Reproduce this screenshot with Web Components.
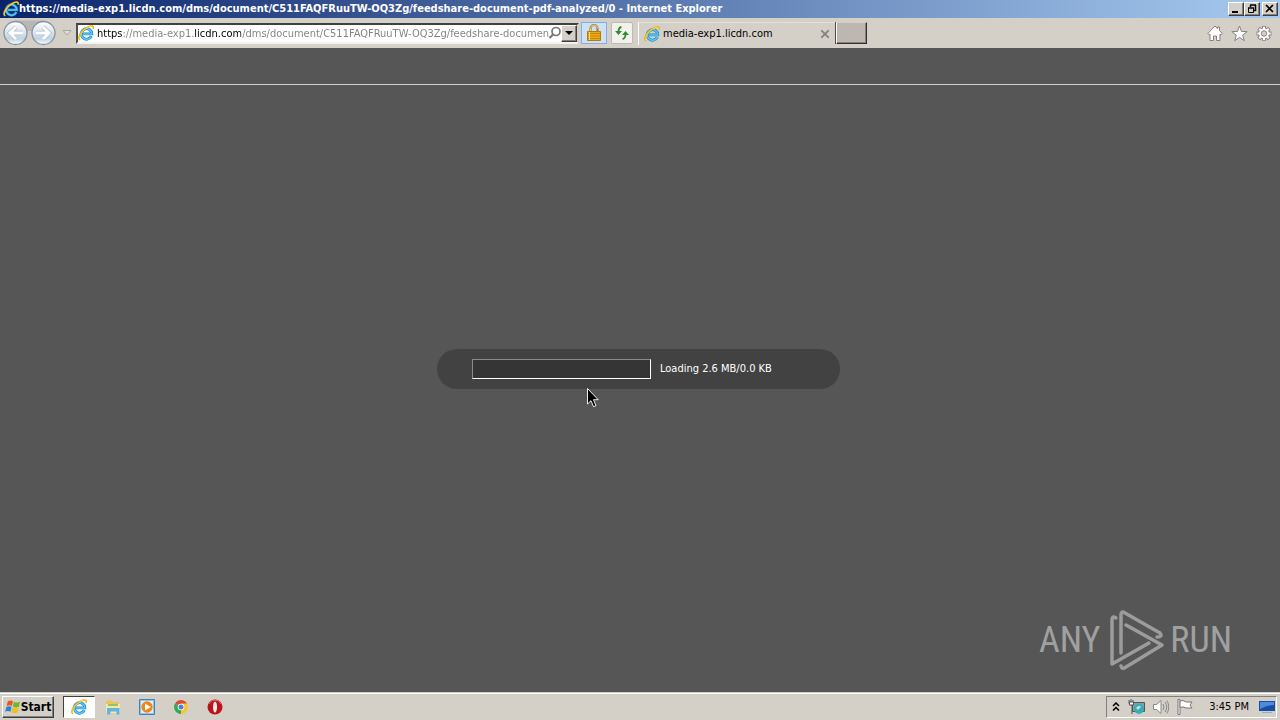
<!DOCTYPE html>
<html lang="en">
<head>
<meta charset="utf-8">
<title>https://media-exp1.licdn.com - Internet Explorer</title>
<style>
  body {
    margin: 0;
    min-height: 100vh;
    display: flex;
    flex-direction: column;
    background: #565656;
    color: #000;
    font: 11px/14px "DejaVu Sans Condensed", "DejaVu Sans", sans-serif;
  }
  pdf-viewer { flex: 1; }
</style>
</head>
<body>
<title-bar>https://media-exp1.licdn.com/dms/document/C511FAQFRuuTW-OQ3Zg/feedshare-document-pdf-analyzed/0 - Internet Explorer</title-bar>
<nav-bar>
  <address-box slot="address" url="https://media-exp1.licdn.com/dms/document/C511FAQFRuuTW-OQ3Zg/feedshare-documen"></address-box>
  <browser-tab slot="tab">media-exp1.licdn.com</browser-tab>
</nav-bar>
<pdf-viewer>
  <load-progress>Loading 2.6 MB/0.0 KB</load-progress>
  <any-run slot="mark"></any-run>
</pdf-viewer>
<task-bar>3:45 PM</task-bar>

<script>
const RESET = `
  button { font: inherit; color: inherit; padding: 0; margin: 0; border: 0; background: none; box-sizing: border-box; display: flex; align-items: center; justify-content: center; flex: none; }
  svg { display: block; flex: none; }
`;

class Base extends HTMLElement {
  constructor() {
    super();
    this.attachShadow({ mode: "open" });
    this.shadowRoot.innerHTML = `<style>${RESET}</style>` + this.render();
  }
}

class IeIcon extends Base {
  render() {
    return `
      <style>
        :host { display: block; flex: none; width: 16px; height: 16px; }
        svg { width: 100%; height: 100%; }
      </style>
      <svg viewBox="0 0 16 16" fill="none">
        <path d="M13.3 11.2A5.3 5.3 0 1 1 13.8 8.9H4.8" stroke="#1b86cf" stroke-width="2.9"/>
        <path d="M13.3 11.2A5.3 5.3 0 1 1 13.8 8.9H4.8" stroke="#5fc8f5" stroke-width="1.5"/>
        <path d="M2 15C-1 12 4 4.800 10 2C13.500.3 16 .8 15.200 3.700" stroke="#e9a90d" stroke-width="1.700"/>
        <path d="M2 14.600C0 11.500 4.500 5 10 2.200C13 .8 15.500 1 15 3.400" stroke="#ffe052" stroke-width=".8"/>
      </svg>`;
  }
}

class TitleBar extends Base {
  render() {
    return `
      <style>
        :host { display: flex; align-items: center; height: 18px; padding: 0 2px 0 3px; background: linear-gradient(90deg, #0a246a, #a6caf0); color: #fff; font-weight: bold; }
        .text { flex: 1; min-width: 0; overflow: hidden; white-space: nowrap; }
        .buttons { display: flex; }
        button { width: 16px; height: 14px; background: #d4d0c8; border: 1px solid; border-color: #fff #404040 #404040 #fff; box-shadow: inset -1px -1px #808080; }
        .close { margin-left: 2px; }
      </style>
      <ie-icon></ie-icon>
      <div class="text"><slot></slot></div>
      <div class="buttons">
        <button aria-label="Minimize"><svg width="12" height="10"><path d="M2 8h6" stroke="#000" stroke-width="2"/></svg></button>
        <button aria-label="Restore"><svg width="12" height="10" fill="none" stroke="#000"><path d="M4 1h6M4.500 1v2M9.500 1v5.500H8M2 4h6" stroke-width="1.500"/><path d="M2.500 4v4.500h5V4"/></svg></button>
        <button class="close" aria-label="Close"><svg width="12" height="10"><path d="M2 1l7 7M9 1L2 8" stroke="#000" stroke-width="1.700"/></svg></button>
      </div>`;
  }
}

class AddressBox extends Base {
  render() {
    // the scheme and the domain are black, the rest of the url is grey
    return `
      <style>
        :host { display: flex; align-items: center; box-sizing: border-box; width: 503px; height: 21px; background: #fff; border: 2px solid; border-color: #404040 #d4d0c8 #f4f2ee #505050; }
        input { flex: 1; min-width: 0; height: 16px; margin-left: 3px; padding: 0; border: 0; outline: 0; font: inherit; color: transparent;
          background: linear-gradient(90deg, #000 26px, #808080 26px, #808080 97px, #000 97px, #000 144px, #808080 144px); -webkit-background-clip: text; background-clip: text; }
        .search { width: 12px; }
        .drop { width: 16px; height: 17px; background: #d4d0c8; border: 1px solid; border-color: #fff #404040 #404040 #fff; box-shadow: inset -1px -1px #808080; }
      </style>
      <ie-icon></ie-icon>
      <input type="text" aria-label="Address">
      <button class="search" aria-label="Search"><svg width="12" height="14" viewBox="0 0 12 14" fill="none" stroke="#777"><circle cx="7" cy="5.500" r="4" stroke-width="1.700"/><path d="M4 8.500L.5 12" stroke-width="2.200"/></svg></button>
      <button class="drop" aria-label="Show history"><svg width="8" height="4"><path d="M0 0h8L4 4z"/></svg></button>`;
  }

  connectedCallback() {
    this.shadowRoot.querySelector("input").value = this.getAttribute("url");
  }
}

class BrowserTab extends Base {
  render() {
    return `
      <style>
        :host { display: flex; align-items: center; box-sizing: border-box; width: 198px; height: 23px; padding: 0 7px 0 5px; border-left: 1px solid #fff; border-top: 1px solid #e4e0da; }
        .label { flex: 1; white-space: nowrap; margin-left: 3px; }
      </style>
      <ie-icon></ie-icon>
      <span class="label"><slot></slot></span>
      <button aria-label="Close tab"><svg width="8" height="8"><path d="M0 0l8 8M8 0L0 8" stroke="#85827e" stroke-width="1.800"/></svg></button>`;
  }
}

class NavBar extends Base {
  render() {
    return `
      <style>
        :host { display: flex; align-items: center; height: 30px; padding: 0 8px 0 3px; background: #d4d0c8; }
        .menu { width: 19px; height: 22px; }
        .lock, .refresh { height: 22px; border: 1px solid; }
        .lock { width: 26px; margin-left: 2px; background: #cce0f8; border-color: #83aeea; }
        .refresh { width: 22px; margin: 0 5px 0 4px; background: #f3f1ee; border-color: #bdb9b3; border-radius: 2px; }
        .newtab { width: 31px; height: 22px; background: #bdb6b1; border: 1px solid; border-color: #d4d0c8 #303030 #303030 #fff; outline: 0; box-shadow: -1px 0 #504c48, inset -1px -1px #85817c; }
        .tools { margin-left: auto; display: flex; gap: 8px; }
      </style>
      <svg width="54" height="28" viewBox="0 0 54 28">
        <defs>
          <linearGradient id="ball" x2="0" y2="1"><stop offset="0" stop-color="#fff"/><stop offset=".5" stop-color="#d9e2ea"/><stop offset=".75" stop-color="#bdd4e5"/><stop offset="1" stop-color="#fff"/></linearGradient>
        </defs>
        <path d="M12 1.500H41V12H12z" fill="#b9b6b3"/>
        <g fill="url(#ball)" stroke="#8494a2" stroke-width="1.300"><circle cx="12.500" cy="14" r="11.500"/><circle cx="40.500" cy="14" r="11.500"/></g>
        <g fill="none" stroke="#aebdca" stroke-width="4.500"><path d="M20 14H7M13 8l-6 6 6 6M33 14h13M40 8l6 6-6 6"/></g>
        <g fill="none" stroke="#fff" stroke-width="3"><path d="M20 14H7M13 8l-6 6 6 6M33 14h13M40 8l6 6-6 6"/></g>
      </svg>
      <button class="menu" aria-label="Recent pages"><svg width="10" height="6"><path d="M1 .5h8L5 5z" fill="#e2dfda" stroke="#aaa6a1"/></svg></button>
      <slot name="address"></slot>
      <button class="lock" aria-label="Security report"><svg width="14" height="18" viewBox="0 0 14 18">
        <path d="M3.500 9V4.500a3.500 3.500 0 0 1 7 0V9" fill="none" stroke="#a88126" stroke-width="2.200"/>
        <path d="M3.500 8V4.500a3.500 3.500 0 0 1 7 0" fill="none" stroke="#f4d990" stroke-width=".8"/>
        <path d="M.5 7.500h13v9H.5z" fill="#e9ac16" stroke="#b87b0b"/><path d="M1 9.500h12M1 12h12M1 14.500h12" stroke="#ca850b"/><path d="M2.500 8v8" stroke="#ffda70"/>
      </svg></button>
      <button class="refresh" aria-label="Refresh"><svg width="14" height="14" viewBox="0 0 14 14" fill="none" stroke="#358a36" stroke-width="1.800">
        <path d="M6.500 1Q3.500 1.500 3.500 6M7.500 13Q10.500 12.500 10.500 8"/><path d="M0 5h7L3.500 9zM7 9h7L10.500 5z" fill="#358a36" stroke="none"/>
      </svg></button>
      <slot name="tab"></slot>
      <button class="newtab" aria-label="New tab"></button>
      <div class="tools">
        <button aria-label="Home"><svg width="16" height="17" viewBox="0 0 16 17"><path d="M8 1L.8 8.500l1.500 1.300L3 9.200V15.500h3.500V11h3v4.500H13V9.200l.8.600 1.500-1.300L12.500 5.600V2h-2v1.600z" fill="#fff" stroke="#85817d"/></svg></button>
        <button aria-label="Favorites"><svg width="17" height="17" viewBox="0 0 17 17"><path d="M8.500 1l2 5.400 5.700.2-4.500 3.500 1.600 5.600-4.800-3.300-4.800 3.300 1.600-5.600L.8 6.600l5.700-.2z" fill="#fff" stroke="#85817d"/></svg></button>
        <button aria-label="Tools"><svg width="16" height="17" viewBox="-8 -8.500 16 17">
          <path d="M0-7.500V7.500M-7.500 0H7.500M-5.300-5.300L5.300 5.300M-5.300 5.300L5.300-5.300" stroke="#85817d" stroke-width="4"/>
          <circle r="5.800" fill="#85817d"/><circle r="5" fill="#fff"/>
          <path d="M0-6.700V-3M0 3v3.700M-6.700 0H-3M3 0h3.700M-4.700-4.700L-3-3M3 3l1.700 1.700M-4.700 4.700L-3 3M3-3l1.700-1.700" stroke="#fff" stroke-width="2.200"/>
          <circle r="2.700" fill="#d4d0c8" stroke="#85817d"/>
        </svg></button>
      </div>`;
  }
}

class LoadProgress extends Base {
  render() {
    return `
      <style>
        :host { display: flex; align-items: center; box-sizing: border-box; position: relative; width: 403px; height: 40px; padding-left: 35px; gap: 9px; border-radius: 20px; background: #424242; color: #fff; }
        progress { appearance: none; -webkit-appearance: none; box-sizing: border-box; width: 179px; height: 20px; border: 1px solid; border-color: #8a8a8a #fff #fff #8a8a8a; background: #353535; }
        progress::-webkit-progress-bar { background: #353535; }
        progress::-webkit-progress-value { background: #0a246a; }
        label { white-space: nowrap; }
        .pointer { position: absolute; left: 150px; top: 39px; }
      </style>
      <progress id="bar" value="0" max="100"></progress>
      <label for="bar"><slot></slot></label>
      <svg class="pointer" width="12" height="20" viewBox="0 0 12 20"><path d="M.5.5v15.500l3.500-3.300 2.500 6 2.500-1-2.500-6h4.700z" stroke="#fff" stroke-width=".9"/></svg>`;
  }
}

class AnyRun extends Base {
  render() {
    return `
      <style>
        :host { display: flex; align-items: center; gap: 6px; color: #a0a0a0; font: 36px/62px "Liberation Sans Narrow", "Roboto Condensed", Roboto, sans-serif; }
      </style>
      <span>ANY</span>
      <svg width="58" height="62" viewBox="0 0 58 62" fill="none" stroke="#9c9c9c" stroke-width="3.500" stroke-linejoin="round" stroke-linecap="round">
        <path d="M10 9Q6 6 6 11V55L43 34"/>
        <path d="M15 44V6Q15 1 19 4L54 24Q57 28 51 28"/>
        <path d="M20 16L56 36L20 58Q16 61 15 57"/>
      </svg>
      <span>RUN</span>`;
  }
}

class PdfViewer extends Base {
  render() {
    return `
      <style>
        :host { display: grid; grid-template-rows: 37px 1fr 39px; position: relative; background: #565656; }
        .toolbar { border-bottom: 1px solid #d4d0c8; box-sizing: border-box; }
        .page { display: grid; place-items: center; padding-right: 3px; }
        .mark { position: absolute; right: 48px; bottom: 21px; }
      </style>
      <div class="toolbar"></div>
      <div class="page"><slot></slot></div>
      <div class="mark"><slot name="mark"></slot></div>`;
  }
}

class TaskBar extends Base {
  render() {
    return `
      <style>
        :host { display: flex; align-items: center; box-sizing: border-box; height: 28px; padding: 1px 3px 1px 2px; background: #d4d0c8; border-top: 1px solid #d4d0c8; box-shadow: inset 0 1px #fff; }
        .start { width: 52px; height: 22px; font-weight: bold; font-size: 12px; border: 1px solid; border-color: #fff #404040 #404040 #fff; box-shadow: inset -1px -1px #808080; }
        .apps { display: flex; margin-left: 9px; }
        .apps button { width: 34px; height: 22px; }
        .apps .active { width: 32px; margin-right: 1px; background: #fff; border: 1px solid; border-color: #404040 #fff #fff #404040; }
        .tray { display: flex; align-items: center; gap: 8px; box-sizing: border-box; height: 22px; margin-left: auto; padding: 0 1px 0 5px; border: 1px solid; border-color: #808080 #fff #fff #808080; }
        .clock { margin: 0 2px 0 8px; white-space: nowrap; }
      </style>
      <button class="start">
        <svg width="16" height="16" viewBox="0 0 17 16"><path d="M3 2Q6 0 8.500 2L7.300 7Q4.500 5.500 1.700 7z" fill="#e95722"/><path d="M9.500 2.500Q12 4 16 2.500L14.700 8Q11 9 8.300 7.500z" fill="#72b72a"/><path d="M1.500 8Q4.500 6.500 7 8L5.800 13Q3 11.500.2 13z" fill="#2b82d5"/><path d="M8 8.500Q11 10 14.500 9L13.300 14Q9.500 15 6.700 13.500z" fill="#f5bd19"/></svg>
        Start
      </button>
      <div class="apps">
        <button class="active" aria-label="Internet Explorer"><ie-icon></ie-icon></button>
        <button aria-label="Explorer"><svg width="16" height="16" viewBox="0 0 16 16"><path d="M1 2l5-1 2 2h6v11H1z" fill="#e9c65a"/><path d="M1 5h14v9H1z" fill="#f8e79c"/><path d="M3 6h10" stroke="#73b36a" stroke-width="1.500"/><path d="M2 15.500V9h12.500v6.500h-3V12.500h-6v3z" fill="#62b5e2"/></svg></button>
        <button aria-label="Media Player"><svg width="16" height="16" viewBox="0 0 16 16"><path d="M.5.5h15v15H.5z" fill="#8ac5ee" stroke="#3e84bc"/><path d="M2 2h12v12H2z" fill="#dff0fb"/><circle cx="8" cy="8" r="5.700" fill="#f08513"/><path d="M6 4.500L12 8l-6 3.500z" fill="#fff"/></svg></button>
        <button aria-label="Chrome"><svg width="14" height="14" viewBox="0 0 14 14"><path d="M7 7L1 3.500A7 7 0 0 1 13 3.500z" fill="#df4938"/><path d="M7 7L1 3.500A7 7 0 0 0 7 14L10 8.500z" fill="#35a853"/><path d="M7 7L7 14A7 7 0 0 0 13 3.500H7z" fill="#fac62d"/><circle cx="7" cy="7" r="3.300" fill="#fff"/><circle cx="7" cy="7" r="2.500" fill="#4285d5"/></svg></button>
        <button aria-label="Opera"><svg width="16" height="16" viewBox="0 0 16 16"><circle cx="8" cy="8" r="7.500" fill="#b91419"/><path d="M2 5a6.500 6.500 0 0 1 12 0" stroke="#df6b6b" stroke-width="1" fill="none"/><ellipse cx="8" cy="8" rx="2" ry="5.500" fill="#f6e9e9"/></svg></button>
      </div>
      <div class="tray">
        <button aria-label="Show hidden icons"><svg width="8" height="10" fill="none" stroke="#000" stroke-width="1.500"><path d="M1 4l3-3 3 3M1 8.500l3-3 3 3"/></svg></button>
        <svg width="17" height="16" viewBox="0 0 17 16"><path d="M4.500 3.500h12v9h-12z" fill="#72a7aa" stroke="#555"/><path d="M1 1v3q0 2 2 2h1v9M5 1v4M3 0v4" stroke="#555" fill="none"/><path d="M1.500 3h4v3h-4z" fill="#fff" stroke="#555"/><circle cx="11" cy="10" r="5" fill="#39aaba"/><path d="M8 9q3-4 5-1l-3 3z" fill="#b4e5cd"/></svg>
        <svg width="16" height="16" viewBox="0 0 16 16" fill="none" stroke="#888"><path d="M.5 5.500h3L8 1.500v13l-4.500-4h-3z" fill="#fff"/><path d="M10 5q2 3 0 6M12 3q3.500 5 0 10M14 1.500q3.500 6.500 0 13"/></svg>
        <svg width="16" height="16" viewBox="0 0 16 16" fill="#fff" stroke="#777"><path d="M1 .5h2v15H1z"/><path d="M3 2q3-1.500 6 1h6l-2 3 2 3H9Q6 7 3 8.500z"/></svg>
        <span class="clock"><slot></slot></span>
        <svg width="16" height="14" viewBox="0 0 16 14"><path d="M0 1h16v10H0z" fill="#184fa5"/><path d="M1 2h14v3Q8 5 1 9z" fill="#4c8cda"/><path d="M3 12h10v1H3z" fill="#8faed0"/></svg>
      </div>`;
  }
}

customElements.define("ie-icon", IeIcon);
customElements.define("title-bar", TitleBar);
customElements.define("address-box", AddressBox);
customElements.define("browser-tab", BrowserTab);
customElements.define("nav-bar", NavBar);
customElements.define("load-progress", LoadProgress);
customElements.define("any-run", AnyRun);
customElements.define("pdf-viewer", PdfViewer);
customElements.define("task-bar", TaskBar);
</script>
</body>
</html>
